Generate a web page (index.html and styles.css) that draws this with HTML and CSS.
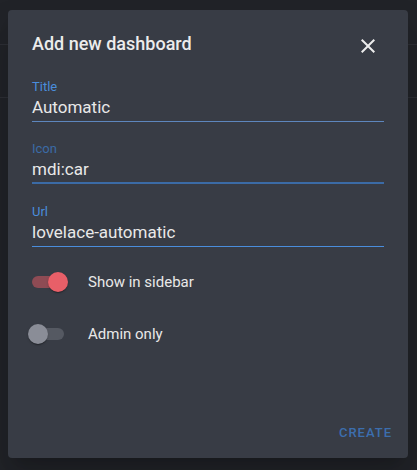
FILE: index.html
```html
<!DOCTYPE html>
<html lang="en">
<head>
    <meta charset="UTF-8">
    <meta name="viewport" content="width=device-width, initial-scale=1.0">
    <title>Add new dashboard</title>
    <link rel="stylesheet" href="styles.css">
</head>
<body>
    <div class="fondo">
        <div class="fondo-barra"></div>
        <div class="fondo-tabs"></div>
    </div>

    <div class="dialogo">
        <div class="dialogo-cabecera">
            <h2 class="dialogo-titulo">Add new dashboard</h2>
            <button type="button" class="btn-cerrar" aria-label="Close">
                <svg viewBox="0 0 24 24" width="24" height="24">
                    <path fill="currentColor" d="M19,6.41L17.59,5L12,10.59L6.41,5L5,6.41L10.59,12L5,17.59L6.41,19L12,13.41L17.59,19L19,17.59L13.41,12L19,6.41Z"/>
                </svg>
            </button>
        </div>

        <div class="dialogo-contenido">
            <div class="campo">
                <label class="etiqueta">Title</label>
                <div class="valor">Automatic</div>
            </div>
            <div class="campo campo-activo">
                <label class="etiqueta">Icon</label>
                <div class="valor">mdi:car</div>
            </div>
            <div class="campo campo-url">
                <label class="etiqueta">Url</label>
                <div class="valor">lovelace-automatic</div>
            </div>

            <div class="switches">
                <div class="fila-switch">
                    <span class="switch switch-on"><span class="switch-pista"></span><span class="switch-bola"></span></span>
                    <span class="switch-texto">Show in sidebar</span>
                </div>
                <div class="fila-switch">
                    <span class="switch"><span class="switch-pista"></span><span class="switch-bola"></span></span>
                    <span class="switch-texto">Admin only</span>
                </div>
            </div>
        </div>

        <div class="dialogo-acciones">
            <button type="button" class="btn-texto">Create</button>
        </div>
    </div>
</body>
</html>
```

FILE: styles.css
```css
:root {
    --fondo-pagina: #212328;
    --fondo-dialogo: #383c45;
    --azul: #4a8ddc;
    --azul-oscuro: #3b6ba6;
    --texto: #e8e8e8;
}

body {
    font-family: Roboto, "Noto Sans", sans-serif;
    background-color: var(--fondo-pagina);
    color: var(--texto);
    margin: 0;
    padding: 0;
    height: 470px;
    overflow: hidden;
}

.fondo-barra {
    height: 44px;
    border-bottom: 1px solid #2d2f35;
}

.fondo-tabs {
    height: 52px;
    border-bottom: 1px solid #2d2f35;
}

.dialogo {
    position: absolute;
    left: 8px;
    top: 10px;
    width: 400px;
    height: 448px;
    background-color: var(--fondo-dialogo);
    border-radius: 4px;
    box-shadow: 0 11px 15px -7px rgba(0,0,0,0.2), 0 24px 38px 3px rgba(0,0,0,0.14);
    display: flex;
    flex-direction: column;
    box-sizing: border-box;
}

.dialogo-cabecera {
    display: flex;
    align-items: center;
    justify-content: space-between;
    padding: 18px 28px 0 24px;
    height: 32px;
}

.dialogo-titulo {
    margin: 0;
    font-size: 18px;
    font-weight: 500;
    line-height: 32px;
    color: #ececec;
}

.btn-cerrar {
    background: none;
    border: none;
    padding: 0;
    width: 24px;
    height: 24px;
    color: #ececec;
    margin-top: 4px;
    cursor: pointer;
}

.btn-cerrar svg {
    display: block;
}

.dialogo-contenido {
    flex: 1;
    padding: 0 24px;
}

.campo {
    margin-top: 19px;
    border-bottom: 1px solid #5d86bd;
    padding-bottom: 2px;
}

.etiqueta {
    display: block;
    font-size: 13px;
    line-height: 16px;
    color: var(--azul);
}

.valor {
    font-size: 17px;
    line-height: 24px;
    color: var(--texto);
}

.campo-activo {
    border-bottom: 2px solid var(--azul-oscuro);
    padding-bottom: 1px;
}

.campo-activo .etiqueta {
    color: var(--azul-oscuro);
}

.campo-url {
    margin-top: 20px;
    border-bottom-color: var(--azul);
}

.switches {
    margin-top: 9px;
}

.fila-switch {
    display: flex;
    align-items: center;
    height: 52px;
    gap: 24px;
}

.switch {
    position: relative;
    width: 32px;
    height: 12px;
    flex-shrink: 0;
}

.switch-pista {
    display: block;
    width: 100%;
    height: 100%;
    border-radius: 6px;
    background-color: #555962;
}

.switch-bola {
    position: absolute;
    top: -4px;
    left: -4px;
    width: 20px;
    height: 20px;
    border-radius: 50%;
    background-color: #8a8d97;
    box-shadow: 0 2px 1px -1px rgba(0,0,0,0.2), 0 1px 1px 0 rgba(0,0,0,0.14), 0 1px 3px 0 rgba(0,0,0,0.12);
}

.switch-on .switch-pista {
    background-color: #8e4b54;
}

.switch-on .switch-bola {
    left: 16px;
    background-color: #e85f68;
}

.switch-texto {
    font-size: 15px;
    line-height: 20px;
    color: var(--texto);
}

.dialogo-acciones {
    display: flex;
    justify-content: flex-end;
    padding: 8px;
}

.btn-texto {
    background: none;
    border: none;
    height: 36px;
    padding: 0 8px;
    font-family: inherit;
    font-size: 13px;
    font-weight: 500;
    letter-spacing: 1px;
    text-transform: uppercase;
    color: #3c6eae;
    cursor: pointer;
}
```
